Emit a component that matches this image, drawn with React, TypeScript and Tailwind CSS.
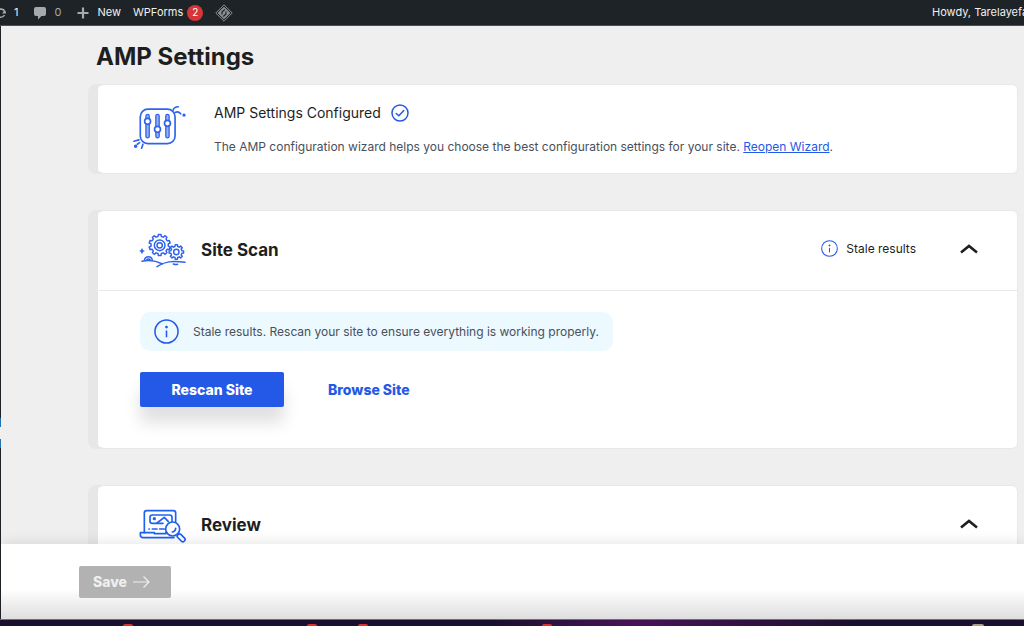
import type { ReactNode } from "react";
import { clsx } from "clsx";

interface PanelProps {
  children: ReactNode;
  className?: string;
}

interface SectionHeaderProps {
  icon: ReactNode;
  title: string;
  status?: ReactNode;
}

function gearPath(cx: number, cy: number, outer: number, inner: number, teeth: number) {
  const step = (Math.PI * 2) / teeth;
  const points: string[] = [];
  for (let i = 0; i < teeth; i++) {
    const a = i * step - Math.PI / 2;
    [
      [inner, -0.3],
      [outer, -0.2],
      [outer, 0.2],
      [inner, 0.3],
    ].forEach(([r, offset]) => {
      const t = a + offset * step;
      points.push(`${(cx + r * Math.cos(t)).toFixed(1)} ${(cy + r * Math.sin(t)).toFixed(1)}`);
    });
  }
  return `M${points.join("L")}Z`;
}

const iconStroke = {
  fill: "none",
  stroke: "currentColor",
  strokeWidth: 5,
  strokeLinecap: "round",
  strokeLinejoin: "round",
} as const;

function SlidersIcon() {
  return (
    <svg width="53" height="44" viewBox="160 74 160 132" className="shrink-0 text-[#2f63ee]" {...iconStroke} aria-hidden="true">
      <rect x="182" y="86" width="105" height="104" rx="23" />
      <g fill="#9db5f5" strokeWidth="4">
        <rect x="199" y="102" width="10" height="71" rx="5" />
        <rect x="229" y="102" width="10" height="71" rx="5" />
        <rect x="259" y="102" width="10" height="71" rx="5" />
      </g>
      <g fill="#fff">
        <circle cx="204" cy="123" r="9" />
        <circle cx="234" cy="147" r="9" />
        <circle cx="264" cy="129" r="9" />
      </g>
      <path d="M281 89c2-7 8-10 16-10M287 96c7-3 12-2 17 4" />
      <path d="M178 179l-15 4M180 187l-7 5M190 192l-4 12" />
      <circle cx="314" cy="104" r="2.5" fill="currentColor" />
      <circle cx="168" cy="198" r="3" fill="currentColor" />
    </svg>
  );
}

function GearsIcon() {
  return (
    <svg width="47" height="35" viewBox="178 99 141 105" className="shrink-0 text-[#2f63ee]" {...iconStroke} strokeWidth="4.4" aria-hidden="true">
      <path d={gearPath(240, 135, 32, 26, 10)} />
      <circle cx="240" cy="136" r="16" />
      <circle cx="240" cy="136" r="8" />
      <path d={gearPath(290, 156, 22, 17, 8)} fill="#fff" />
      <circle cx="290" cy="156" r="8" />
      <path d="M187 148v10M182 153h10" strokeWidth="5" />
      <path d="M187 184c20-5 42-2 62 8M232 200c22-16 46-18 84-13" />
      <path d="M194 181c3-14 22-14 24 0M201 180c2-4 9-4 11 0" />
      <path d="M281 192c4 2 9 2 13 1" />
    </svg>
  );
}

function ReviewIcon() {
  return (
    <svg width="47" height="34" viewBox="418 100 141 102" className="shrink-0 overflow-visible text-[#1f62f0]" {...iconStroke} aria-hidden="true">
      <path d="M434 171v-59a7 7 0 0 1 7-7h80a7 7 0 0 1 7 7v27" />
      <path d="M499 171v3h-35v-3h-42v6a9 9 0 0 0 9 9h92" />
      <path d="M499 171h5" />
      <path d="M490 143h-32a7 7 0 0 1-7-7v-11a7 7 0 0 1 7-7h52a7 7 0 0 1 7 7v12" />
      <path d="M472 142l22-17 12 13" />
      <circle cx="464" cy="129" r="2.5" fill="currentColor" />
      <path d="M448 160h1M458 160h14M480 160h14" />
      <circle cx="519" cy="160" r="21" fill="#fff" />
      <path d="M528 158c0 6-4 10-10 11" />
      <rect x="531" y="180" width="27" height="13" rx="5.5" fill="#fff" transform="rotate(45 544.5 186.5)" />
    </svg>
  );
}

function InfoIcon({ size }: { size: number }) {
  return (
    <svg width={size} height={size} viewBox="0 0 26 26" fill="none" stroke="currentColor" className="shrink-0 text-[#2459e7]" aria-hidden="true">
      <circle cx="13" cy="13" r="12" strokeWidth="1.6" />
      <path d="M13 12v7" strokeWidth="1.6" />
      <circle cx="13" cy="8.4" r="1" fill="currentColor" />
    </svg>
  );
}

function AdminBar() {
  return (
    <header className="flex h-[26px] shrink-0 items-center justify-between overflow-hidden whitespace-nowrap border-b border-[#4b5054] bg-[#1d2327] text-[11px] text-[#f0f0f1]">
      <nav className="flex items-center" aria-label="Toolbar">
        <a href="#" className="-ml-1 flex items-center gap-2">
          <svg width="10" height="12" viewBox="0 0 10 12" fill="none" stroke="#a7aaad" strokeWidth="1.6" aria-hidden="true">
            <path d="M1 8a4.200 4.200 0 0 0 7.500 0M9 5a4.200 4.200 0 0 0-7.500-1" />
            <path d="M6 6.500h5L8.500 3.500ZM0 5.500h4L1 2.500Z" fill="#a7aaad" stroke="none" />
          </svg>
          1
        </a>
        <a href="#" className="ml-4 flex items-center gap-2 text-[#a7aaad]">
          <svg width="12" height="14" viewBox="0 0 12 14" fill="#a7aaad" aria-hidden="true">
            <path d="M2 1h8a2 2 0 0 1 2 2v5a2 2 0 0 1-2 2H7.500L4 13.500V10H2a2 2 0 0 1-2-2V3a2 2 0 0 1 2-2Z" />
          </svg>
          0
        </a>
        <a href="#" className="ml-4 flex items-center gap-2">
          <svg width="12" height="12" viewBox="0 0 12 12" stroke="#a7aaad" strokeWidth="2.200" aria-hidden="true">
            <path d="M6 0.500v11M0.500 6h11" />
          </svg>
          New
        </a>
        <a href="#" className="ml-3 flex items-center gap-1">
          WPForms
          <span className="flex size-4 items-center justify-center rounded-full bg-[#d63638] text-[10px] text-white">2</span>
        </a>
        <a href="#" className="ml-3" aria-label="Site tools">
          <svg width="18" height="18" viewBox="0 0 18 18" fill="none" stroke="#8c8f94" aria-hidden="true">
            <path d="M9 0.800L17.200 9L9 17.200L0.800 9Z" />
            <path d="M9 3.200L14.800 9L9 14.800L3.200 9Z" fill="#8c8f94" />
            <path d="M9.800 5.500L7 8v2.500M8.200 12.500L11 10V7.500" stroke="#1d2327" strokeWidth="1.200" />
          </svg>
        </a>
      </nav>
      <a href="#" className="w-[92px] shrink-0">
        Howdy, Tarelayefa
      </a>
    </header>
  );
}

function Panel({ children, className }: PanelProps) {
  return (
    <section className="rounded-lg bg-[#e7e7e7] pl-2.5">
      <div className={clsx("rounded-md border border-[#e8e8e8] border-l-white bg-white", className)}>{children}</div>
    </section>
  );
}

function SectionHeader({ icon, title, status }: SectionHeaderProps) {
  return (
    <div className="flex h-[79px] items-center pl-10 pr-[38px]">
      {icon}
      <h2 className="ml-[15px] flex-1 text-[17px] font-bold">{title}</h2>
      <div className="flex items-center gap-[43px] pb-1">
        {status}
        <button type="button" aria-label={`Toggle ${title}`}>
          <svg width="20" height="12" viewBox="0 0 20 12" fill="none" stroke="currentColor" strokeWidth="2.600" aria-hidden="true">
            <path d="M2 9.500L10 3L18 9.500" />
          </svg>
        </button>
      </div>
    </div>
  );
}

function WindowEdge() {
  return (
    <div className="flex w-px shrink-0 flex-col" aria-hidden="true">
      <div className="grow-[392] bg-[#1d2327]" />
      <div className="h-[9px] bg-[#2271b1]" />
      <div className="h-3 bg-[#efefef]" />
      <div className="h-[9px] bg-[#2271b1]" />
      <div className="grow-[171] bg-[#1d2327]" />
    </div>
  );
}

function Dock() {
  return (
    <div
      className="flex h-[7px] shrink-0 items-end overflow-hidden border-t border-[#77777d] bg-linear-to-r from-[#1b1030] from-48% via-[#4b125c] via-62% to-[#1b1030] to-84%"
      aria-hidden="true"
    >
      <div className="ml-[12%] h-0.5 w-2.5 rounded-t-full bg-[#e0352c]" />
      <div className="ml-[17%] h-0.5 w-2.5 rounded-t-full bg-[#e0352c]" />
      <div className="ml-[4%] h-0.5 w-2.5 rounded-t-full bg-[#e0352c]" />
      <div className="ml-[17%] h-0.5 w-2.5 rounded-t-full bg-[#e0352c]" />
      <div className="ml-[41%] h-0.5 w-3 rounded-t-full bg-[#b3a08c]" />
    </div>
  );
}

export default function App() {
  return (
    <div className="flex h-screen flex-col bg-[#efefef] font-[Inter,sans-serif] text-[#1e1e1e]">
      <AdminBar />
      <div className="flex min-h-0 flex-1">
        <WindowEdge />
        <div className="flex min-w-0 flex-1 flex-col">
          <main className="min-h-0 flex-1 overflow-hidden pl-[87px] pr-1.5 pt-[17px]">
            <h1 className="mb-[13px] ml-2 text-2xl leading-7 font-bold">AMP Settings</h1>
            <div className="flex flex-col gap-9">
              <Panel className="flex gap-7 px-[34px] pt-5 pb-4">
                <SlidersIcon />
                <div>
                  <h2 className="flex h-4 items-center gap-2.5 text-sm">
                    AMP Settings Configured
                    <svg width="18" height="18" viewBox="0 0 18 18" fill="none" stroke="#2459e7" strokeWidth="1.500" strokeLinecap="round" aria-hidden="true">
                      <circle cx="9" cy="9" r="8" />
                      <path d="M5.200 9.500L7.800 11.800L12.800 6.500" />
                    </svg>
                  </h2>
                  <p className="mt-4 text-xs leading-5 text-[#48505c]">
                    The AMP configuration wizard helps you choose the best configuration settings for your site.{" "}
                    <a href="#" className="text-[#2459e7] underline">
                      Reopen Wizard
                    </a>
                    .
                  </p>
                </div>
              </Panel>

              <Panel>
                <SectionHeader
                  icon={<GearsIcon />}
                  title="Site Scan"
                  status={
                    <p className="flex items-center gap-2 text-xs">
                      <InfoIcon size={17} />
                      Stale results
                    </p>
                  }
                />
                <div className="border-t border-[#e8e8e8] px-[41px] pt-[21px] pb-[41px]">
                  <p className="flex h-[39px] w-fit items-center gap-3.5 rounded-[10px] bg-[#ecf9fe] px-3.5 text-xs text-[#48505c]">
                    <InfoIcon size={25} />
                    Stale results. Rescan your site to ensure everything is working properly.
                  </p>
                  <div className="mt-[21px] flex items-center gap-11">
                    <button type="button" className="h-[35px] w-36 rounded-xs bg-[#2459e7] text-sm font-extrabold text-white shadow-[0_16px_16px_rgba(0,0,0,0.12)]">
                      Rescan Site
                    </button>
                    <a href="#" className="text-sm font-extrabold text-[#2459e7]">
                      Browse Site
                    </a>
                  </div>
                </div>
              </Panel>

              <Panel>
                <SectionHeader icon={<ReviewIcon />} title="Review" />
              </Panel>
            </div>
          </main>
          <footer className="z-10 flex h-[75px] shrink-0 items-center bg-linear-to-b from-white from-60% to-[#dedede] pl-[78px] shadow-[0_0_14px_rgba(0,0,0,0.12)]">
            <button type="button" disabled className="flex h-8 w-[92px] items-center gap-1.5 rounded-xs bg-[#b2b2b2] pl-3.5 text-sm font-extrabold text-[#efefef]">
              Save
              <svg width="17" height="12" viewBox="0 0 17 12" fill="none" stroke="currentColor" strokeWidth="1.200" aria-hidden="true">
                <path d="M0 6h16M10.500 0.500L16 6L10.500 11.500" />
              </svg>
            </button>
          </footer>
        </div>
      </div>
      <Dock />
    </div>
  );
}
